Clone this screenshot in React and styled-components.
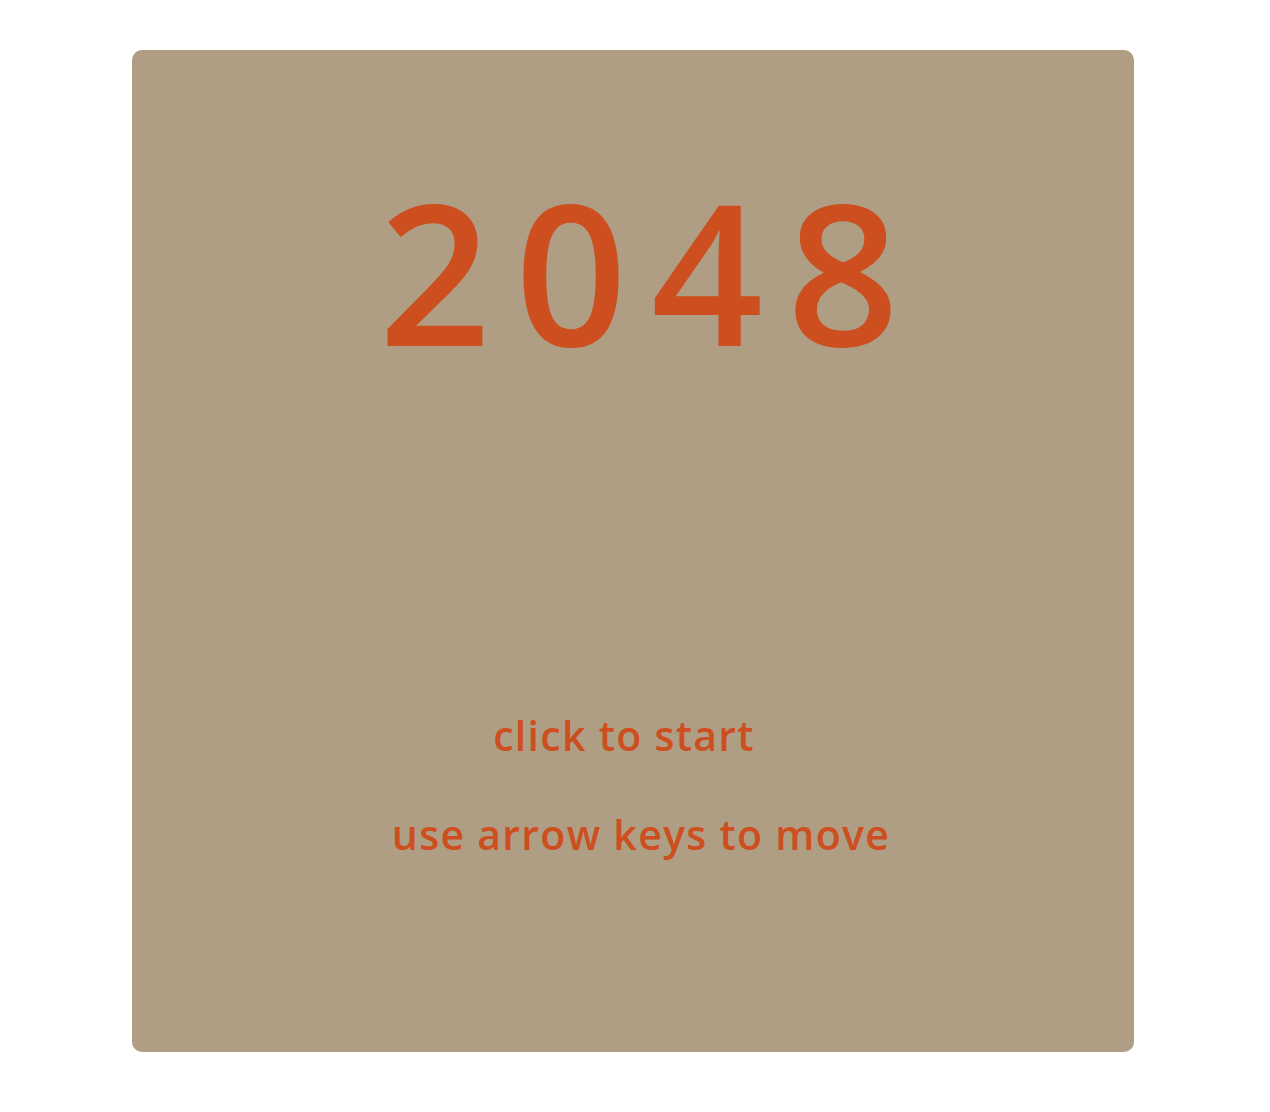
import React from 'react';
import styled, { createGlobalStyle } from 'styled-components';

const GlobalStyle = createGlobalStyle`
	html,
	body {
		margin: 0;
		padding: 0;
		background: #fff;
	}
`;

const Page = styled.div`
	padding: 50px 0 0 132px;
`;

const Board = styled.div`
	width: 1002px;
	height: 1002px;
	border-radius: 10px;
	background: #af9e83;
	display: flex;
	flex-direction: column;
	align-items: center;
	color: #cd4e1f;
	font-family: 'Open Sans', 'DejaVu Sans', sans-serif;
	font-weight: 600;
	cursor: pointer;
`;

const Title = styled.h1`
	margin: 122px 0 0 36px;
	font-size: 196px;
	line-height: 196px;
	letter-spacing: 24px;
	font-weight: 600;
`;

const Hint = styled.p`
	margin: ${(p) => p.$top}px 0 0 ${(p) => p.$shift}px;
	font-size: 41px;
	line-height: 40px;
	letter-spacing: 1.3px;
`;

export default function App() {
	return (
		<>
			<GlobalStyle />
			<Page>
				<Board>
					<Title>2048</Title>
					<Hint $top={347} $shift={-18}>click to start</Hint>
					<Hint $top={59} $shift={16}>use arrow keys to move</Hint>
				</Board>
			</Page>
		</>
	);
}
